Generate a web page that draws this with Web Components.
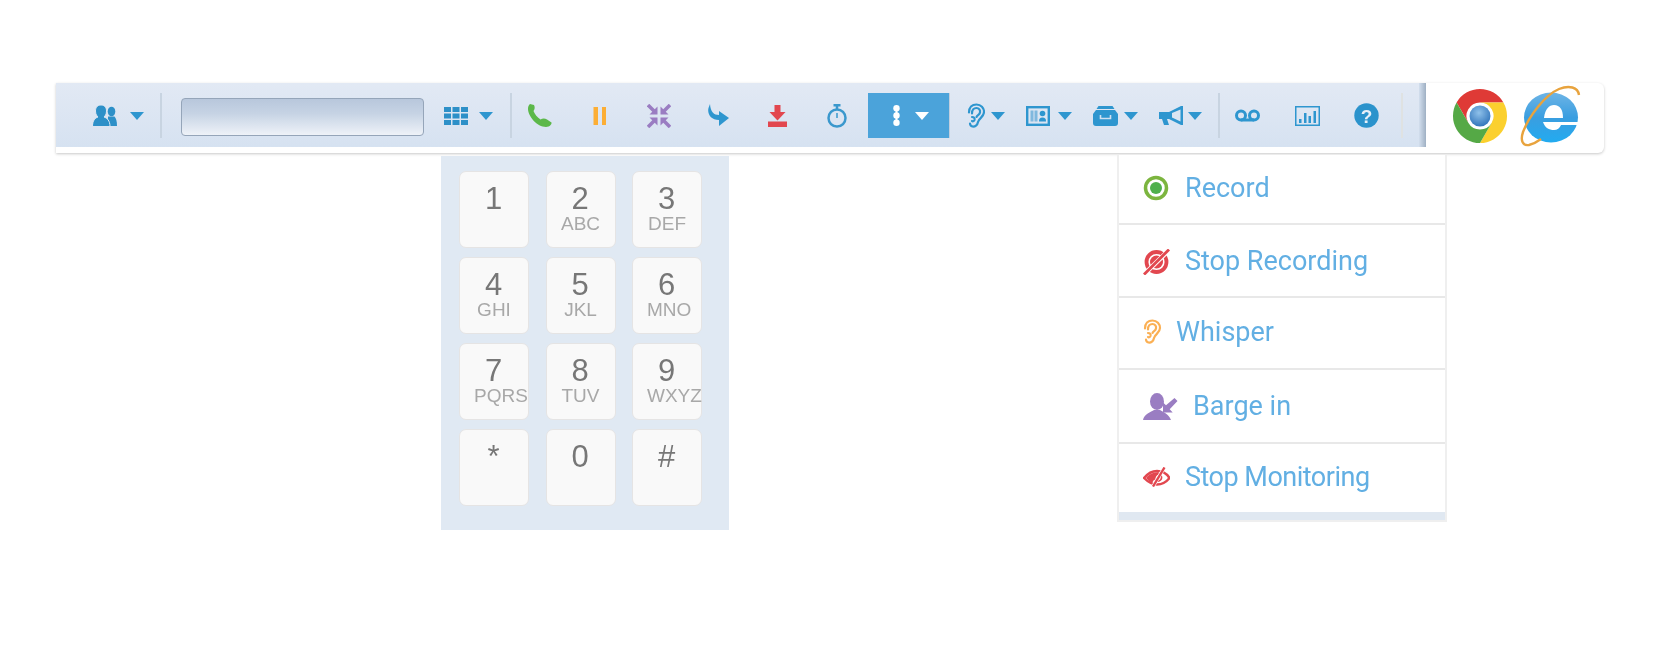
<!DOCTYPE html>
<html>
<head>
<meta charset="utf-8">
<title>Softphone toolbar</title>
<style>
    html, body { margin: 0; background: #fff; }
    body { font-family: "Liberation Sans", Arial, sans-serif; }
</style>
</head>
<body>

<cc-app>
    <cc-toolbar>
        <cc-tool name="people" caret style="--w:74px;--g:13px"></cc-tool>
        <cc-sep style="margin:0 19px 0 5px"></cc-sep>
        <cc-number></cc-number>
        <cc-tool name="grid" caret style="--w:84px;--g:11px;margin-left:2px"></cc-tool>
        <cc-sep style="margin:0 -2px 0 0"></cc-sep>
        <cc-tool name="phone"></cc-tool>
        <cc-tool name="pause"></cc-tool>
        <cc-tool name="compress"></cc-tool>
        <cc-tool name="forward"></cc-tool>
        <cc-tool name="download"></cc-tool>
        <cc-tool name="timer"></cc-tool>
        <cc-tool name="kebab" caret active style="--w:81px;--g:15px;margin-left:1px;padding-left:5px"></cc-tool>
        <cc-tool name="ear" caret style="--w:59px;--g:6px;margin-left:7px"></cc-tool>
        <cc-tool name="contact" caret style="--w:67.5px;--g:8px"></cc-tool>
        <cc-tool name="box" caret style="--w:65.5px;--g:6px"></cc-tool>
        <cc-tool name="megaphone" caret style="--w:64px;--g:5px"></cc-tool>
        <cc-sep style="margin:0 -2px 0 6px"></cc-sep>
        <cc-tool name="voicemail"></cc-tool>
        <cc-tool name="chart"></cc-tool>
        <cc-tool name="help"></cc-tool>
        <cc-sep light style="margin-left:4px"></cc-sep>
        <cc-browsers slot="after"></cc-browsers>
    </cc-toolbar>

    <cc-dialpad slot="popups">
        <cc-key digit="1"></cc-key>
        <cc-key digit="2" letters="ABC"></cc-key>
        <cc-key digit="3" letters="DEF"></cc-key>
        <cc-key digit="4" letters="GHI"></cc-key>
        <cc-key digit="5" letters="JKL"></cc-key>
        <cc-key digit="6" letters="MNO"></cc-key>
        <cc-key digit="7" letters="PQRS"></cc-key>
        <cc-key digit="8" letters="TUV"></cc-key>
        <cc-key digit="9" letters="WXYZ"></cc-key>
        <cc-key digit="*"></cc-key>
        <cc-key digit="0"></cc-key>
        <cc-key digit="#"></cc-key>
    </cc-dialpad>

    <cc-menu slot="popups">
        <cc-menu-item icon="record" style="--h:68px;--pb:2px;--ig:16px">Record</cc-menu-item>
        <cc-menu-item icon="stoprec" style="--h:69px;--pb:0px;--ig:15px;padding-top:2px">Stop Recording</cc-menu-item>
        <cc-menu-item icon="whisper" style="--h:70px;--pb:1px;--ig:14px">Whisper</cc-menu-item>
        <cc-menu-item icon="barge" style="--h:72px;--pb:0px;--ig:15px">Barge in</cc-menu-item>
        <cc-menu-item icon="eyeoff" last style="--h:68px;--pb:2px;--ig:15px;letter-spacing:-.5px">Stop Monitoring</cc-menu-item>
    </cc-menu>
</cc-app>

<script>
    const ICONS = {
        people: [24, 21, `<g fill="#2d90c8">
            <ellipse cx="18.500" cy="6.500" rx="3.800" ry="4.800"/><path d="M15 11.500h6.500c1.500 1.500 2.500 4.500 2.500 9.500h-9z"/>
            <path stroke="#dfe8f3" stroke-width="1" d="M8 0c3.500 0 5.500 2.500 5.500 6s-1.500 5-2.500 6c3 1 6 3.500 6 9.500H-.500C-.500 15.500 2 13 5 12c-1-1-2.500-2.500-2.500-6S4.500 0 8 0z"/></g>`],
        grid: [24, 18, `<g fill="#2d90c8">` + [0, 1, 2].map(r => [0, 1, 2].map(c =>
            `<rect x="${c * 8.5}" y="${r * 6.5}" width="7" height="5"/>`).join('')).join('') + `</g>`],
        phone: [25, 23, `<path fill="#5cb84a" d="M3 0l4 1c1 2 1 4-.5 6 1 3 4 6.500 7 8.500 2-1.500 4.500-1.500 6.500 0l4.500 3c.5 1.500-1.500 4.500-5.500 4.500C10 23 1 12 1 5c0-2 .5-4 2-5z"/>`],
        pause: [13, 18, `<g fill="#fcae35"><rect x=".5" width="4.500" height="18"/><rect x="9" width="4.500" height="18"/></g>`],
        compress: [24, 24, `<g fill="#9a7dc2" stroke="#9a7dc2">` + ['', 'translate(24 0) scale(-1 1)', 'translate(0 24) scale(1 -1)', 'translate(24 24) scale(-1 -1)'].map(t =>
            `<g transform="${t}"><path stroke="none" d="M10.500 2.500v8h-8z"/><path stroke-width="3.500" d="M1 1l6.500 6.500"/></g>`).join('') + `</g>`],
        forward: [21, 23, `<path fill="#2e96cf" d="M2 0L.5 4C-1 10 3 16 11 16v6l10-8-10-7v4C6 11 2.500 8 2 0z"/>`],
        download: [19, 22, `<g fill="#e2474f"><rect x="6.500" width="6" height="7"/><path d="M1.500 7h16l-8 8.500z"/><rect y="16.500" width="19" height="5.500"/></g>`],
        timer: [20, 24, `<g fill="none" stroke="#3a98cd"><circle cx="10" cy="14" r="8.500" stroke-width="2.500"/><path stroke-width="2.500" d="M6.500 1.200h7M10 2v3"/><path stroke-width="1.500" d="M10 9v5"/></g>`],
        kebab: [7, 21, `<g fill="#fff"><rect x="2.500" y="2" width="2" height="16"/><circle cx="3.500" cy="3.200" r="3.200"/><circle cx="3.500" cy="10.500" r="3.200"/><circle cx="3.500" cy="17.800" r="3.200"/></g>`],
        ear: [18, 25, earPaths('#2e96cf')],
        contact: [24, 20, `<rect x="1.200" y="1.200" width="21.600" height="17.600" fill="none" stroke="#2e96cf" stroke-width="2.400"/>
            <rect x="4.500" y="4.500" width="3" height="11" fill="#7fb8de"/><rect x="8.500" y="4.500" width="3" height="11" fill="#7fb8de"/>
            <g fill="#2e96cf"><circle cx="16.500" cy="7.500" r="2.800"/><path d="M13 15.500c0-3 1-4 3.500-4s3.500 1 3.500 4z"/></g>`],
        box: [25, 20, `<path fill="#2e96cf" d="M5.500 0h14l2 3H3.500zM3 4h19l3 4v9c0 2-1 3-3 3H3c-2 0-3-1-3-3V8z"/>
            <path fill="none" stroke="#cfe0f0" stroke-width="1.600" d="M7.500 9v3.500h10V9"/>`],
        megaphone: [24, 19, `<path fill="#2e96cf" d="M0 6h10L22 0h2v19h-2L10 13H8l2 6H5L3 13H0z"/><path fill="#dbe6f2" d="M13 7l8.500-3.500v12L13 11.500z"/>`],
        voicemail: [25, 13, `<g fill="none" stroke="#2e96cf" stroke-width="3"><circle cx="6" cy="6.500" r="4.500"/><circle cx="19" cy="6.500" r="4.500"/><path d="M6 11h13"/></g>`],
        chart: [25, 20, `<rect x=".75" y=".75" width="23.500" height="18.500" fill="none" stroke="#2e96cf" stroke-width="1.500"/>
            <g fill="#2e96cf"><rect x="4" y="13" width="2.500" height="4"/><rect x="9" y="7" width="2.500" height="10"/><rect x="13.500" y="10" width="2.500" height="7"/><rect x="18.500" y="5" width="2.500" height="12"/></g>`],
        help: [25, 25, `<circle cx="12.500" cy="12.500" r="12.200" fill="#2b93cc"/>
            <text x="12.500" y="19.500" text-anchor="middle" font-family="Liberation Sans" font-weight="700" font-size="19" fill="#e8f0f8">?</text>`],
        record: [26, 26, `<circle cx="13" cy="13" r="10.500" fill="none" stroke="#7cb53f" stroke-width="3.500"/><circle cx="13" cy="13" r="6" fill="#4fb04c"/>`],
        stoprec: [27, 26, `<circle cx="13.500" cy="13" r="10" fill="none" stroke="#e2474f" stroke-width="3.800"/><circle cx="13.500" cy="13" r="6.500" fill="#e2474f"/>
            <path d="M26 1L1.500 25" stroke="#fff" stroke-width="4.500"/><path d="M26 .5L1 25.500" stroke="#e2474f" stroke-width="2.800"/>`],
        whisper: [19, 27, earPaths('#fbb054')],
        barge: [35, 27, `<g fill="#9a7dc2"><ellipse cx="14" cy="8.500" rx="7" ry="8.500"/><path d="M0 27c1-6 8-8 11-10h6c3 2 9 4 11 10z"/>
            <path d="M20 19.500V9.500l3 2.800 8.500-7.300 3 3-7.800 8.300 3 3.200z"/></g>`],
        eyeoff: [27, 20, `<path d="M1 11C6 5 10 4 14 4c6 0 10 3 12.500 7-3 4-7 6.500-12.500 6.500S5 15 1 11z" fill="#fff" stroke="#e2474f" stroke-width="2.400"/>
            <path d="M3 11c3-4 7-5.500 13-6L9 16c-2-1-4-3-6-5z" fill="#e2474f"/>
            <circle cx="15" cy="10.500" r="3.500" fill="none" stroke="#e2474f" stroke-width="1.800"/>
            <path d="M21 1L10 19.500" stroke="#fff" stroke-width="3.500"/><path d="M21.500 .5L10 19.500" stroke="#e2474f" stroke-width="2.400"/>`]
    };

    function earPaths(color) {
        return `<g fill="none" stroke="${color}" stroke-width="2.200" stroke-linecap="round">
            <path d="M2 9.500C2 4.500 5 1.500 9.500 1.500 14 1.500 17 5 17 9c0 5-5 6-6 10-.5 3-3 5-5.500 4.500C4 23 3 22 3 20.500"/>
            <path d="M5 10.500C5 6.500 7 5 9.500 5 12 5 13.500 7 13 9.500c-.5 2.500-3 2.500-3.500 4.500"/>
            <path d="M5 14c2 0 3 1 2.500 3C7 18.500 5.500 18.500 5 18"/></g>`;
    }

    const iconSvg = name => {
        const [w, h, body] = ICONS[name];
        return `<svg xmlns="http://www.w3.org/2000/svg" width="${w}" height="${h}" viewBox="0 0 ${w} ${h}" style="display:block;flex:none">${body}</svg>`;
    };

    const shadow = (el, html) => {
        el.attachShadow({ mode: 'open' }).innerHTML = html;
    };

    customElements.define('cc-app', class extends HTMLElement {
        constructor() {
            super();
            shadow(this, `<style>
                :host { display: block; position: relative; height: 658px; padding: 83px 56px 0; box-sizing: border-box; filter: blur(.5px); }
            </style><slot></slot><slot name="popups"></slot>`);
        }
    });

    customElements.define('cc-toolbar', class extends HTMLElement {
        constructor() {
            super();
            shadow(this, `<style>
                :host { display: flex; height: 70px; width: 1548px; background: #fff; border-radius: 0 6px 6px 0; box-shadow: 0 1px 3px rgba(0,0,0,.22); }
                .bar { width: 1370px; height: 64px; box-sizing: border-box; padding: 10px 0 9px 25px; display: flex; align-items: stretch;
                    background: linear-gradient(#e2e9f4, #d6e2f1); position: relative; }
                .bar::after { content: ""; position: absolute; right: 0; top: 0; bottom: 0; width: 7px; background: linear-gradient(90deg, #d3dfee, #9fb0c3); }
            </style><div class="bar"><slot></slot></div><slot name="after"></slot>`);
        }
    });

    customElements.define('cc-sep', class extends HTMLElement {
        constructor() {
            super();
            shadow(this, `<style>
                :host { display: block; flex: none; width: 2px; background: #c8d4e1; }
                :host([light]) { background: #dfe2e2; }
            </style>`);
        }
    });

    customElements.define('cc-number', class extends HTMLElement {
        constructor() {
            super();
            shadow(this, `<style>
                :host { display: block; flex: none; width: 243px; height: 38px; margin-top: 5px; box-sizing: border-box; border: 1.500px solid #95a5b9; border-radius: 4px;
                    background: linear-gradient(#b8c7dc, #c6d3e4 40%, #eef2f8); }
            </style>`);
        }
    });

    customElements.define('cc-tool', class extends HTMLElement {
        constructor() {
            super();
            const active = this.hasAttribute('active');
            const caret = this.hasAttribute('caret')
                ? `<svg width="14" height="8" viewBox="0 0 14 8" style="display:block;flex:none"><path d="M0 0h14L7 8z" fill="${active ? '#fff' : '#2e96cf'}"/></svg>` : '';
            shadow(this, `<style>
                :host { display: flex; flex: none; align-items: center; justify-content: center; box-sizing: border-box; width: var(--w, 59.500px); gap: var(--g, 0); }
                :host([active]) { background: #4ba3da; box-shadow: 1px 0 0 #c2cfde; }
            </style>${iconSvg(this.getAttribute('name'))}${caret}`);
        }
    });

    customElements.define('cc-browsers', class extends HTMLElement {
        constructor() {
            super();
            const R = 27;
            shadow(this, `<style>
                :host { display: flex; align-items: flex-start; gap: 13px; padding: 1px 0 0 26px; }
                svg { display: block; flex: none; overflow: visible; }
            </style>
            <svg width="56" height="62" viewBox="-28 -32 56 62">
                <defs><radialGradient id="b" cx=".45" cy=".35" r=".7"><stop offset="0" stop-color="#8fc1ea"/><stop offset="1" stop-color="#2d71b8"/></radialGradient></defs>
                <circle r="${R}" fill="#fff"/>
                <path fill="#df3a36" d="M23.400-13.500A27 27 0 0 0-23.400-13.500L-11.700 6.750A13.500 13.500 0 0 1 0-13.500z"/>
                <path fill="#fbd02e" d="M0 27A27 27 0 0 0 23.400-13.500H0A13.500 13.500 0 0 1 11.700 6.750z"/>
                <path fill="#55a946" d="M-23.400-13.500A27 27 0 0 0 0 27L11.700 6.750A13.500 13.500 0 0 1-11.700 6.750z"/>
                <circle r="10.500" fill="url(#b)"/>
            </svg>
            <svg width="62" height="66" viewBox="0 0 62 66">
                <defs><linearGradient id="e" x1="0" y1="0" x2="0" y2="1"><stop offset="0" stop-color="#6db4e6"/><stop offset=".5" stop-color="#3a9ee0"/><stop offset="1" stop-color="#22abf0"/></linearGradient></defs>
                <ellipse cx="30" cy="33.500" rx="27" ry="25" fill="url(#e)"/>
                <path fill="#fff" d="M23 34c1-9 5-13 10-13 6 0 9 5 9 13z"/>
                <path fill="#fff" d="M22 38h35v3H40c-1 3-4 5-7 5-5 0-9-2-11-8z"/>
                <path fill="none" stroke="#e8a33d" stroke-width="2.400" d="M58 11C57 3 48 1 38 5 24 11 8 32 2 48-1 57 2 62 8 61c4-1 8-3 12-6"/>
            </svg>`);
        }
    });

    customElements.define('cc-dialpad', class extends HTMLElement {
        constructor() {
            super();
            shadow(this, `<style>
                :host { position: absolute; left: 441px; top: 156px; width: 288px; height: 374px; box-sizing: border-box; padding: 14.500px 0 0 18px; background: #e0e9f3;
                    display: grid; grid-template-columns: repeat(3, 70px); grid-auto-rows: 77px; gap: 9px 16.500px; }
            </style><slot></slot>`);
        }
    });

    customElements.define('cc-key', class extends HTMLElement {
        constructor() {
            super();
            const digit = this.getAttribute('digit');
            const letters = this.getAttribute('letters') || '';
            shadow(this, `<style>
                :host { display: block; box-sizing: border-box; background: #f9f9f9; border: 1.500px solid #e5e4e4; border-radius: 7px; text-align: center; padding: 11px 14px 0; white-space: nowrap;
                    font-family: "Liberation Sans", Arial, sans-serif; }
                .d { font-size: 31px; line-height: 31px; color: #777; margin-left: -1px; }
                .l { font-size: 19px; line-height: 19px; color: #a8a8a8; }
            </style><div class="d">${digit}</div><div class="l">${letters}</div>`);
        }
    });

    customElements.define('cc-menu', class extends HTMLElement {
        constructor() {
            super();
            shadow(this, `<style>
                :host { position: absolute; left: 1117px; top: 155px; width: 330px; box-sizing: border-box; border: 2px solid #efefef; border-top: 0; background: #fff; }
                .foot { height: 8px; background: #e0e8f1; }
            </style><slot></slot><div class="foot"></div>`);
        }
    });

    customElements.define('cc-menu-item', class extends HTMLElement {
        constructor() {
            super();
            shadow(this, `<style>
                :host { display: flex; align-items: center; box-sizing: content-box; height: calc(var(--h) - var(--pb)); padding: 0 0 var(--pb) 24px; gap: var(--ig);
                    border-bottom: 2px solid #e8e8e8; font: 27px/1 Roboto, sans-serif; color: #62afe3; }
                :host([last]) { border-bottom: 0; }
            </style>${iconSvg(this.getAttribute('icon'))}<slot></slot>`);
        }
    });
</script>
</body>
</html>
